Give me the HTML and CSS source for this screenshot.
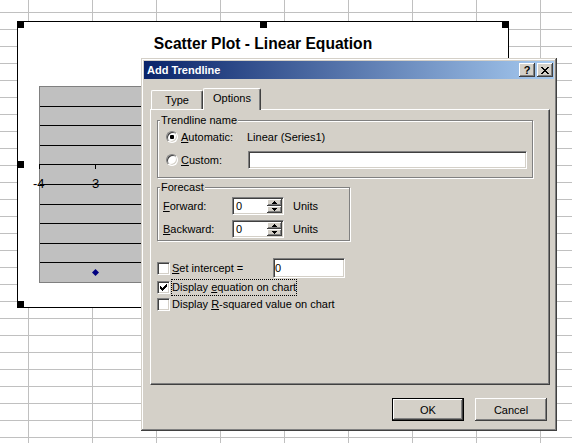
FILE: index.html
```html
<!DOCTYPE html>
<html>
<head>
<meta charset="utf-8">
<title>Add Trendline</title>
<link rel="stylesheet" href="styles.css">
</head>
<body>
<div class="sheet">
  <div class="chart">
    <span class="handle h-tl"></span>
    <span class="handle h-tm"></span>
    <span class="handle h-tr"></span>
    <span class="handle h-ml"></span>
    <span class="handle h-mr"></span>
    <span class="handle h-bl"></span>
    <span class="handle h-bm"></span>
    <span class="handle h-br"></span>
    <div class="chart-title">Scatter Plot - Linear Equation</div>
    <div class="plot">
      <div class="grid-row"></div>
      <div class="grid-row"></div>
      <div class="grid-row"></div>
      <div class="grid-row"></div>
      <div class="grid-row"></div>
      <div class="grid-row"></div>
      <div class="grid-row"></div>
      <div class="grid-row"></div>
      <div class="grid-row"></div>
      <div class="grid-row"></div>
      <span class="tick t1"></span>
      <span class="tick t2"></span>
      <span class="axis-label l1">-4</span>
      <span class="axis-label l2">3</span>
      <span class="point"></span>
    </div>
  </div>

  <div class="dialog">
    <div class="titlebar">
      <span class="title">Add Trendline</span>
      <span class="cap-btns">
        <span class="cap-btn">?</span>
        <span class="cap-btn"><svg width="8" height="7" viewBox="0 0 8 7"><path d="M0 0h2v1h-2z M6 0h2v1h-2z M1 1h2v1h-2z M5 1h2v1h-2z M2 2h4v1h-4z M3 3h2v1h-2z M2 4h4v1h-4z M1 5h2v1h-2z M5 5h2v1h-2z M0 6h2v1h-2z M6 6h2v1h-2z" fill="#000"/></svg></span>
      </span>
    </div>
    <div class="body">
      <div class="tabs">
        <div class="tab tab-type">Type</div>
        <div class="tab tab-options">Options</div>
      </div>
      <div class="panel">
        <fieldset class="group group-name">
          <legend>Trendline name</legend>
          <div class="group-body name-body">
            <div class="row">
              <span class="radio-cell"><span class="radio on"></span><span><u>A</u>utomatic:</span></span>
              <span>Linear (Series1)</span>
            </div>
            <div class="row">
              <span class="radio-cell"><span class="radio"></span><span><u>C</u>ustom:</span></span>
              <span class="field field-custom"></span>
            </div>
          </div>
        </fieldset>

        <fieldset class="group group-forecast">
          <legend>Forecast</legend>
          <div class="group-body fc-body">
            <div class="fc-row">
              <span class="fc-label"><u>F</u>orward:</span>
              <span class="field spin">
                <span class="spin-text">0</span>
                <span class="spin-btns">
                  <span class="spin-btn"><svg width="5" height="3" viewBox="0 0 5 3"><path d="M2 0h1v1h-1z M1 1h3v1h-3z M0 2h5v1h-5z" fill="#000"/></svg></span>
                  <span class="spin-btn"><svg width="5" height="3" viewBox="0 0 5 3"><path d="M0 0h5v1h-5z M1 1h3v1h-3z M2 2h1v1h-1z" fill="#000"/></svg></span>
                </span>
              </span>
              <span class="units">Units</span>
            </div>
            <div class="fc-row">
              <span class="fc-label"><u>B</u>ackward:</span>
              <span class="field spin">
                <span class="spin-text">0</span>
                <span class="spin-btns">
                  <span class="spin-btn"><svg width="5" height="3" viewBox="0 0 5 3"><path d="M2 0h1v1h-1z M1 1h3v1h-3z M0 2h5v1h-5z" fill="#000"/></svg></span>
                  <span class="spin-btn"><svg width="5" height="3" viewBox="0 0 5 3"><path d="M0 0h5v1h-5z M1 1h3v1h-3z M2 2h1v1h-1z" fill="#000"/></svg></span>
                </span>
              </span>
              <span class="units">Units</span>
            </div>
          </div>
        </fieldset>

        <div class="checks">
          <div class="chk-row chk-first">
            <span class="chk-cell"><span class="check"></span><span class="chk-text"><u>S</u>et intercept =</span></span>
            <span class="field field-small"><span class="field-text">0</span></span>
          </div>
          <div class="chk-row">
            <span class="check"><svg width="7" height="7" viewBox="0 0 7 7"><path d="M6 0h1v1h-1z M5 1h2v1h-2z M0 2h1v1h-1z M4 2h3v1h-3z M0 3h2v1h-2z M3 3h3v1h-3z M0 4h5v1h-5z M1 5h3v1h-3z M2 6h1v1h-1z" fill="#000"/></svg></span>
            <span class="chk-text focus">Display <u>e</u>quation on chart</span>
          </div>
          <div class="chk-row">
            <span class="check"></span>
            <span class="chk-text">Display <u>R</u>-squared value on chart</span>
          </div>
        </div>
      </div>
      <div class="buttons">
        <span class="btn btn-default">OK</span>
        <span class="btn">Cancel</span>
      </div>
    </div>
  </div>
</div>
</body>
</html>
```

FILE: styles.css
```css
* { box-sizing: border-box; }

body {
  margin: 0;
  font-family: "Liberation Sans", Arial, sans-serif;
}

.sheet {
  position: relative;
  width: 572px;
  height: 443px;
  overflow: hidden;
  background-color: #fff;
  background-image:
    linear-gradient(to right, #c0c0c0 1px, transparent 1px),
    linear-gradient(to bottom, #c0c0c0 1px, transparent 1px);
  background-size: 64px 17px;
  background-position: 28px 12px;
}

/* ---------- chart object ---------- */
.chart {
  position: absolute;
  left: 17px;
  top: 21px;
  width: 492px;
  height: 287px;
  border: 1px solid #000;
  background: #fff;
  padding-top: 13px;
}

.handle {
  position: absolute;
  width: 7px;
  height: 7px;
  background: #000;
}
.h-tl { left: -1px; top: -1px; }
.h-tm { left: 242px; top: -1px; }
.h-tr { right: -1px; top: -1px; }
.h-ml { left: -1px; top: 139px; }
.h-mr { right: -1px; top: 139px; }
.h-bl { left: -1px; bottom: -1px; }
.h-bm { left: 242px; bottom: -1px; }
.h-br { right: -1px; bottom: -1px; }

.chart-title {
  font-weight: bold;
  font-size: 15.6px;
  line-height: 18px;
  text-align: center;
  color: #000;
}

.plot {
  position: relative;
  margin: 33px 0 0 21px;
  width: 450px;
  height: 197px;
  border: 1px solid #808080;
  background: #c0c0c0;
  display: flex;
  flex-direction: column;
}
.grid-row { flex: 1; }
.grid-row + .grid-row { border-top: 1px solid #000; }

.tick {
  position: absolute;
  top: 77px;
  width: 1px;
  height: 5px;
  background: #000;
}
.t1 { left: -1px; }
.t2 { left: 55px; }

.axis-label {
  position: absolute;
  top: 89px;
  font-size: 13px;
  line-height: 15px;
  color: #000;
}
.l1 { left: -7px; }
.l2 { left: 52px; }

.point {
  position: absolute;
  left: 52px;
  top: 182px;
  width: 7px;
  height: 7px;
  background: #000080;
  clip-path: polygon(50% 0, 100% 50%, 50% 100%, 0 50%);
}

/* ---------- dialog ---------- */
.dialog {
  position: absolute;
  left: 141px;
  top: 58px;
  width: 416px;
  height: 373px;
  padding: 3px;
  background: #d4d0c8;
  box-shadow:
    inset -1px -1px #404040,
    inset 1px 1px #d4d0c8,
    inset -2px -2px #808080,
    inset 2px 2px #fff;
  display: flex;
  flex-direction: column;
  font-size: 11px;
  color: #000;
}

.titlebar {
  height: 18px;
  display: flex;
  align-items: center;
  padding: 0 1px 0 3px;
  background: linear-gradient(to right, #0a246a, #a6caf0);
}
.title {
  flex: 1;
  color: #fff;
  font-weight: bold;
  font-size: 11px;
}
.cap-btns {
  display: flex;
  gap: 2px;
}
.cap-btn {
  width: 16px;
  height: 14px;
  display: flex;
  align-items: center;
  justify-content: center;
  background: #d4d0c8;
  box-shadow:
    inset -1px -1px #404040,
    inset 1px 1px #fff,
    inset -2px -2px #808080;
  font-weight: bold;
  font-size: 11px;
  line-height: 12px;
}

.body {
  flex: 1;
  display: flex;
  flex-direction: column;
  padding: 9px 4px 0 6px;
}

.tabs {
  display: flex;
  align-items: flex-end;
  height: 21px;
  padding-left: 1px;
}
.tab {
  text-align: center;
  padding-top: 3px;
  line-height: 13px;
  background: #d4d0c8;
  border-left: 1px solid #fff;
  border-top: 1px solid #fff;
  border-right: 1px solid #404040;
  border-radius: 2px 2px 0 0;
  box-shadow: inset -1px 0 #808080;
}
.tab-type {
  width: 52px;
  height: 19px;
}
.tab-options {
  width: 58px;
  height: 22px;
  margin-bottom: -1px;
  position: relative;
  z-index: 1;
}

.panel {
  height: 276px;
  border-top: 1px solid #fff;
  border-left: 1px solid #fff;
  border-right: 1px solid #404040;
  border-bottom: 1px solid #404040;
  box-shadow: inset -1px -1px #808080;
  padding: 3px 0 0 6px;
  display: flex;
  flex-direction: column;
  align-items: flex-start;
}

.group {
  margin: 0;
  padding: 0;
  min-width: 0;
  border: 1px solid #808080;
  box-shadow: inset 1px 1px #fff, 1px 1px #fff;
}
.group legend {
  margin-left: 2px;
  padding: 0 1px;
  line-height: 14px;
  background: #d4d0c8;
}
.group-name { width: 376px; }
.group-forecast { width: 193px; margin-top: 2px; }

.name-body { padding: 1px 5px 8px 8px; }
.fc-body { padding: 3px 0 2px 5px; }

.row {
  display: flex;
  align-items: center;
  height: 18px;
}
.row + .row { margin-top: 5px; }
.radio-cell {
  width: 81px;
  display: flex;
  align-items: center;
  gap: 3px;
}

.radio {
  position: relative;
  width: 12px;
  height: 12px;
  border-radius: 50%;
  background: #fff;
  border: 1px solid;
  border-color: #808080 #fff #fff #808080;
  box-shadow: inset 1px 1px #404040, inset -1px -1px #d4d0c8;
}
.radio.on::after {
  content: "";
  position: absolute;
  left: 3px;
  top: 3px;
  width: 4px;
  height: 4px;
  border-radius: 1px;
  background: #000;
}

.field {
  background: #fff;
  border: 1px solid;
  border-color: #808080 #fff #fff #808080;
  box-shadow: inset 1px 1px #404040, inset -1px -1px #d4d0c8;
  height: 18px;
}
.field-custom {
  width: 279px;
  margin-left: 1px;
}

.fc-row {
  display: flex;
  align-items: center;
  height: 18px;
}
.fc-row + .fc-row { margin-top: 5px; }
.fc-label { width: 69px; }
.units { margin-left: 9px; }

.spin {
  width: 52px;
  display: flex;
  padding: 1px;
}
.spin-text {
  flex: 1;
  padding-left: 2px;
  line-height: 14px;
}
.spin-btns {
  width: 15px;
  display: flex;
  flex-direction: column;
}
.spin-btn {
  flex: 1;
  display: flex;
  align-items: center;
  justify-content: center;
  padding-bottom: 1px;
  background: #d4d0c8;
  box-shadow:
    inset -1px -1px #404040,
    inset 1px 1px #fff,
    inset -2px -2px #808080;
}

.checks {
  margin-top: 17px;
  display: flex;
  flex-direction: column;
}
.chk-row {
  display: flex;
  align-items: center;
  height: 17px;
}
.chk-first {
  height: 20px;
  margin-bottom: 1px;
}
.chk-cell {
  width: 116px;
  display: flex;
  align-items: center;
}
.check {
  width: 13px;
  height: 13px;
  margin-right: 1px;
  display: flex;
  align-items: center;
  justify-content: center;
  background: #fff;
  border: 1px solid;
  border-color: #808080 #fff #fff #808080;
  box-shadow: inset 1px 1px #404040, inset -1px -1px #d4d0c8;
}
.chk-text {
  border: 1px solid transparent;
  line-height: 15px;
}
.chk-text.focus { border: 1px dotted #000; }

.field-small {
  width: 72px;
  height: 20px;
  padding-left: 1px;
  display: flex;
  align-items: center;
}

.buttons {
  display: flex;
  justify-content: flex-end;
  gap: 11px;
  margin-top: 13px;
  padding-right: 3px;
}
.btn {
  width: 72px;
  height: 23px;
  display: flex;
  align-items: center;
  justify-content: center;
  background: #d4d0c8;
  box-shadow:
    inset -1px -1px #404040,
    inset 1px 1px #fff,
    inset -2px -2px #808080;
}
.btn-default {
  border: 1px solid #000;
}
```
